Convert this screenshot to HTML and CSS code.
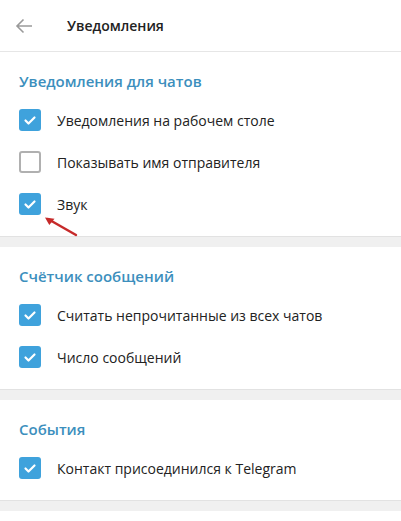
FILE: index.html
```html
<!DOCTYPE html>
<html lang="ru">
<head>
  <meta charset="UTF-8" />
  <meta name="viewport" content="width=device-width, initial-scale=1.0" />
  <title>Уведомления</title>
  <link rel="stylesheet" href="styles.css">
</head>
<body>

  <div class="topbar">
    <svg class="back" width="18" height="16" viewBox="0 0 18 16">
      <path d="M17 8H2M8.5 1.5L2 8l6.5 6.5" fill="none" stroke="#9a9a9a" stroke-width="1.6"/>
    </svg>
    <span class="title">Уведомления</span>
  </div>

  <div class="lista">

    <div class="secao">
      <h2>Уведомления для чатов</h2>
      <label class="opcao">
        <span class="caixa marcada"><svg viewBox="0 0 22 22"><path d="M6.5 11.5l3 3 6-6" /></svg></span>
        Уведомления на рабочем столе
      </label>
      <label class="opcao">
        <span class="caixa"></span>
        Показывать имя отправителя
      </label>
      <label class="opcao">
        <span class="caixa marcada"><svg viewBox="0 0 22 22"><path d="M6.5 11.5l3 3 6-6" /></svg></span>
        Звук
      </label>
      <!-- seta vermelha apontando pro checkbox -->
      <svg class="seta" width="40" height="24" viewBox="0 0 40 24">
        <path d="M34 20L6 4" stroke="#c62a2a" stroke-width="2.4" stroke-linecap="round" fill="none"/>
        <path d="M3 2.5l9.5 1.2-5.2 6.3z" fill="#c62a2a"/>
      </svg>
    </div>

    <div class="secao">
      <h2>Счётчик сообщений</h2>
      <label class="opcao">
        <span class="caixa marcada"><svg viewBox="0 0 22 22"><path d="M6.5 11.5l3 3 6-6" /></svg></span>
        Считать непрочитанные из всех чатов
      </label>
      <label class="opcao">
        <span class="caixa marcada"><svg viewBox="0 0 22 22"><path d="M6.5 11.5l3 3 6-6" /></svg></span>
        Число сообщений
      </label>
    </div>

    <div class="secao">
      <h2>События</h2>
      <label class="opcao">
        <span class="caixa marcada"><svg viewBox="0 0 22 22"><path d="M6.5 11.5l3 3 6-6" /></svg></span>
        Контакт присоединился к Telegram
      </label>
    </div>

  </div>

</body>
</html>
```

FILE: styles.css
```css
body {
  margin: 0;
  font-family: "Open Sans", Arial, sans-serif;
  background: #fff;
  color: #222;
}

.topbar {
  display: flex;
  align-items: center;
  height: 51px;
  padding-left: 15px;
  background: #fff;
  border-bottom: 1px solid #e6e6e6;
}

.back {
  margin-right: 34px;
}

.title {
  font-size: 14px;
  font-weight: 600;
  color: #222;
}

.lista {
  background: #f0f0f0;
  padding-bottom: 10px;
}

.secao {
  position: relative;
  background: #fff;
  padding: 19px 0 11px 19px;
  border-bottom: 1px solid #e2e2e2;
  margin-bottom: 10px;
}

.secao:last-child {
  margin-bottom: 0;
}

h2 {
  margin: 0 0 8px;
  font-size: 15px;
  line-height: 20px;
  font-weight: 600;
  color: #3c8fbd;
}

.opcao {
  display: flex;
  align-items: center;
  height: 42px;
  font-size: 14px;
  color: #222;
}

.caixa {
  box-sizing: border-box;
  width: 22px;
  height: 22px;
  margin-right: 16px;
  border: 2px solid #b0b0b0;
  border-radius: 3px;
}

.caixa.marcada {
  border: none;
  background: #3fa2dc;
}

.caixa svg {
  display: block;
  width: 22px;
  height: 22px;
}

.caixa path {
  fill: none;
  stroke: #fff;
  stroke-width: 2.2;
  stroke-linecap: round;
  stroke-linejoin: round;
}

.seta {
  position: absolute;
  left: 42px;
  top: 163px;
}
```
